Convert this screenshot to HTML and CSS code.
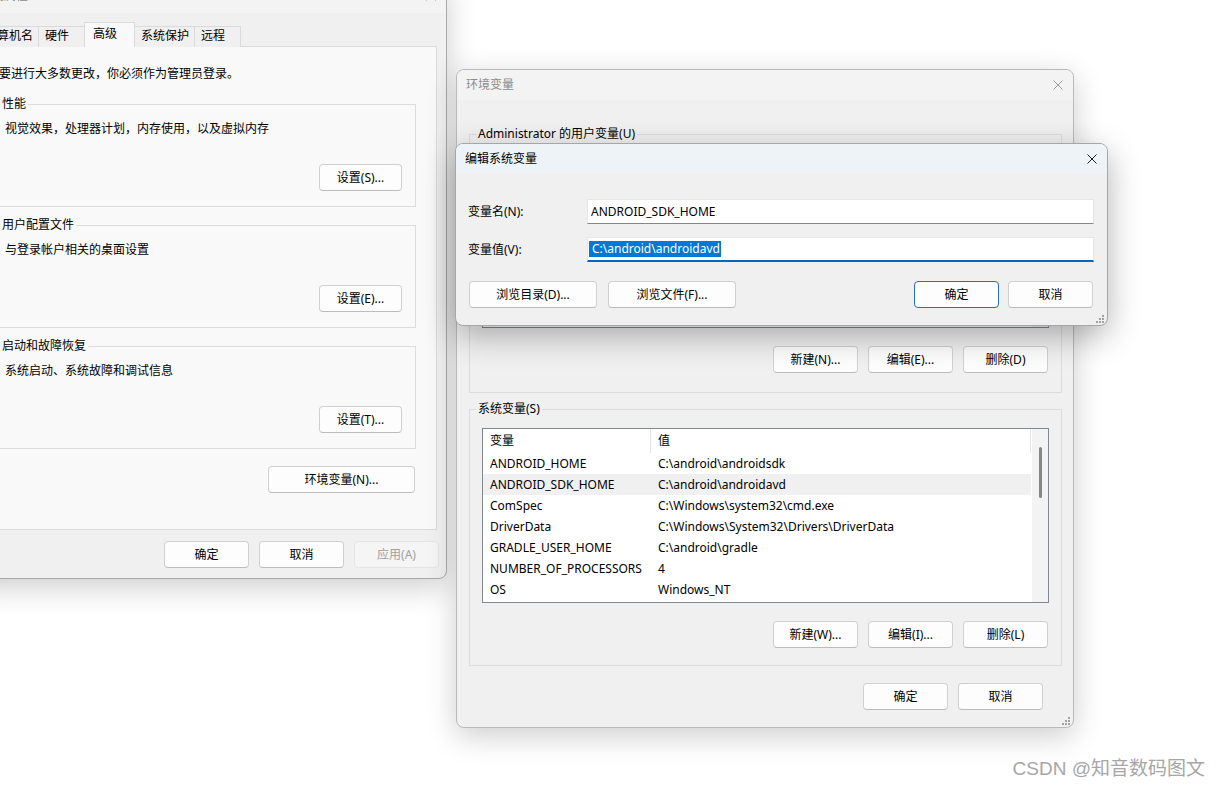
FILE: index.html
```html
<!DOCTYPE html>
<html lang="zh-CN">
<head>
    <meta charset="UTF-8">
    <title>环境变量</title>
    <link rel="stylesheet" href="styles.css">
</head>
<body>
<div class="desktop">

    <!-- 系统属性 -->
    <div class="window sys-props">
        <div class="titlebar sys-title">
            <span class="title">系统属性</span>
            <svg class="close" viewBox="0 0 10 10"><path d="M0.5 0.5L9.5 9.5M9.5 0.5L0.5 9.5"/></svg>
        </div>
        <div class="sys-body">
            <div class="tabs">
                <div class="tab first">计算机名</div>
                <div class="tab">硬件</div>
                <div class="tab active">高级</div>
                <div class="tab">系统保护</div>
                <div class="tab">远程</div>
            </div>
            <div class="tab-page">
                <p class="intro">要进行大多数更改，你必须作为管理员登录。</p>

                <fieldset class="group sys-group">
                    <legend>性能</legend>
                    <p>视觉效果，处理器计划，内存使用，以及虚拟内存</p>
                    <div class="group-actions"><button class="btn">设置(S)...</button></div>
                </fieldset>

                <fieldset class="group sys-group">
                    <legend>用户配置文件</legend>
                    <p>与登录帐户相关的桌面设置</p>
                    <div class="group-actions"><button class="btn">设置(E)...</button></div>
                </fieldset>

                <fieldset class="group sys-group">
                    <legend>启动和故障恢复</legend>
                    <p>系统启动、系统故障和调试信息</p>
                    <div class="group-actions"><button class="btn">设置(T)...</button></div>
                </fieldset>

                <div class="env-row"><button class="btn btn-env">环境变量(N)...</button></div>
            </div>
            <div class="dialog-buttons">
                <button class="btn">确定</button>
                <button class="btn">取消</button>
                <button class="btn" disabled>应用(A)</button>
            </div>
        </div>
    </div>

    <!-- 环境变量 -->
    <div class="window env-vars">
        <div class="titlebar env-title">
            <span class="title">环境变量</span>
            <svg class="close" viewBox="0 0 10 10"><path d="M0.5 0.5L9.5 9.5M9.5 0.5L0.5 9.5"/></svg>
        </div>
        <div class="env-body">
            <fieldset class="group env-group user-vars">
                <legend>Administrator 的用户变量(U)</legend>
                <!-- list content sits under the edit dialog -->
                <div class="var-list">
                    <div class="var-table"></div>
                    <div class="scrollbar"></div>
                </div>
                <div class="group-actions">
                    <button class="btn">新建(N)...</button>
                    <button class="btn">编辑(E)...</button>
                    <button class="btn">删除(D)</button>
                </div>
            </fieldset>

            <fieldset class="group env-group sys-vars">
                <legend>系统变量(S)</legend>
                <div class="var-list">
                    <div class="var-table">
                        <div class="var-row var-head"><span class="col-name">变量</span><span class="col-value">值</span></div>
                        <div class="var-row"><span class="col-name">ANDROID_HOME</span><span class="col-value">C:\android\androidsdk</span></div>
                        <div class="var-row selected"><span class="col-name">ANDROID_SDK_HOME</span><span class="col-value">C:\android\androidavd</span></div>
                        <div class="var-row"><span class="col-name">ComSpec</span><span class="col-value">C:\Windows\system32\cmd.exe</span></div>
                        <div class="var-row"><span class="col-name">DriverData</span><span class="col-value">C:\Windows\System32\Drivers\DriverData</span></div>
                        <div class="var-row"><span class="col-name">GRADLE_USER_HOME</span><span class="col-value">C:\android\gradle</span></div>
                        <div class="var-row"><span class="col-name">NUMBER_OF_PROCESSORS</span><span class="col-value">4</span></div>
                        <div class="var-row"><span class="col-name">OS</span><span class="col-value">Windows_NT</span></div>
                    </div>
                    <div class="scrollbar"><div class="thumb"></div></div>
                </div>
                <div class="group-actions">
                    <button class="btn">新建(W)...</button>
                    <button class="btn">编辑(I)...</button>
                    <button class="btn">删除(L)</button>
                </div>
            </fieldset>

            <div class="dialog-buttons env-buttons">
                <button class="btn">确定</button>
                <button class="btn">取消</button>
            </div>
        </div>
        <svg class="grip" viewBox="0 0 8 8"><rect x="6" y="0" width="2" height="2"/><rect x="3" y="3" width="2" height="2"/><rect x="6" y="3" width="2" height="2"/><rect x="0" y="6" width="2" height="2"/><rect x="3" y="6" width="2" height="2"/><rect x="6" y="6" width="2" height="2"/></svg>
    </div>

    <!-- 编辑系统变量 -->
    <div class="window edit-var">
        <div class="titlebar edit-title active">
            <span class="title">编辑系统变量</span>
            <svg class="close" viewBox="0 0 10 10"><path d="M0.5 0.5L9.5 9.5M9.5 0.5L0.5 9.5"/></svg>
        </div>
        <div class="edit-body">
            <div class="field-row">
                <label class="field-label">变量名(N):</label>
                <div class="field">ANDROID_SDK_HOME</div>
            </div>
            <div class="field-row">
                <label class="field-label">变量值(V):</label>
                <div class="field focused"><span class="sel">C:\android\androidavd</span></div>
            </div>
            <div class="edit-buttons">
                <div class="btn-group">
                    <button class="btn btn-browse">浏览目录(D)...</button>
                    <button class="btn btn-browse">浏览文件(F)...</button>
                </div>
                <div class="btn-group right">
                    <button class="btn default">确定</button>
                    <button class="btn">取消</button>
                </div>
            </div>
        </div>
        <svg class="grip" viewBox="0 0 8 8"><rect x="6" y="0" width="2" height="2"/><rect x="3" y="3" width="2" height="2"/><rect x="6" y="3" width="2" height="2"/><rect x="0" y="6" width="2" height="2"/><rect x="3" y="6" width="2" height="2"/><rect x="6" y="6" width="2" height="2"/></svg>
    </div>

    <div class="watermark">CSDN @知音数码图文</div>
</div>
</body>
</html>
```

FILE: styles.css
```css
* {
    margin: 0;
    padding: 0;
    box-sizing: border-box;
}

body {
    width: 1220px;
    height: 788px;
    overflow: hidden;
    background: #fff;
    font-family: "Noto Sans", "Noto Sans CJK SC", sans-serif;
    font-size: 12px;
    line-height: 16px;
    color: #000;
}

.desktop {
    position: relative;
    width: 1220px;
    height: 788px;
    overflow: hidden;
}

/* windows */
.window {
    position: absolute;
    display: flex;
    flex-direction: column;
    background: #f0f0f0;
    border: 1px solid #b9b9b9;
    border-radius: 8px;
    overflow: hidden;
    box-shadow: 0 8px 30px rgba(0, 0, 0, 0.2);
}

.sys-props {
    left: -28px;
    top: -22px;
    width: 475px;
    height: 601px;
    border-color: #a9a9a9;
    z-index: 1;
}

.env-vars {
    left: 456px;
    top: 69px;
    width: 618px;
    height: 659px;
    z-index: 2;
}

.edit-var {
    left: 455px;
    top: 143px;
    width: 653px;
    height: 183px;
    border-color: #a6a6a6;
    z-index: 3;
    box-shadow: 0 10px 32px rgba(0, 0, 0, 0.3);
}

.titlebar {
    flex: none;
    display: flex;
    align-items: center;
    justify-content: space-between;
    padding: 0 10px 0 9px;
    background: #f3f3f3;
}

.titlebar .title {
    color: #8c8c8c;
}

.titlebar.active {
    background: #eef3f8;
}

.titlebar.active .title {
    color: #000;
}

.sys-title { height: 34px; padding-left: 7px; }
.env-title { height: 30px; }
.edit-title { height: 29px; }

.close {
    width: 10px;
    height: 10px;
    fill: none;
    stroke: #9a9a9a;
    stroke-width: 1;
}

.active .close {
    stroke: #1b1b1b;
}

.grip {
    position: absolute;
    right: 3px;
    bottom: 2px;
    width: 8px;
    height: 8px;
    fill: #a3a3a3;
}

/* buttons */
.btn {
    width: 85px;
    height: 27px;
    font: inherit;
    color: #000;
    background: #fdfdfd;
    border: 1px solid #d0d0d0;
    border-bottom-color: #bcbcbc;
    border-radius: 4px;
}

.btn:disabled {
    color: #a0a0a0;
    background: #f5f5f5;
    border-color: #e5e5e5;
}

.btn.default {
    border-color: #1f6fc5;
}

/* group boxes */
.group {
    border: 1px solid #dcdcdc;
    min-width: 0;
}

.group legend {
    padding: 0 2px;
}

.group-actions {
    display: flex;
    justify-content: flex-end;
    gap: 10px;
}

/* 系统属性 */
.sys-body {
    flex: 1;
    display: flex;
    flex-direction: column;
    padding: 10px 9px 10px 8px;
}

.tabs {
    flex: none;
    display: flex;
    align-items: flex-end;
    height: 24px;
    margin-left: -3px;
    margin-bottom: -1px;
    position: relative;
    z-index: 1;
}

.tab {
    height: 21px;
    min-width: 47px;
    padding: 1px 5px 0 6px;
    border: 1px solid #dadada;
    border-bottom: none;
    margin-right: -1px;
    background: #f0f0f0;
    white-space: nowrap;
}

.tab.first {
    width: 61px;
}

.tab.active {
    height: 25px;
    min-width: 51px;
    padding: 3px 5px 0 8px;
    background: #f9f9f9;
    position: relative;
    z-index: 1;
}

.tab-page {
    flex: 1;
    background: #f9f9f9;
    border: 1px solid #dadada;
    padding: 19px 20px 0 11px;
}

.intro {
    padding-left: 6px;
}

.sys-group {
    margin-top: 14px;
    padding: 9px 13px 15px 11px;
}

.sys-group + .sys-group {
    margin-top: 10px;
}

.sys-group legend {
    margin-left: -5px;
}

.sys-group .group-actions {
    margin-top: 27px;
}

.sys-group .btn {
    width: 83px;
}

.env-row {
    display: flex;
    justify-content: flex-end;
    margin-top: 17px;
    padding-right: 1px;
}

.btn-env {
    width: 147px;
}

.dialog-buttons {
    flex: none;
    display: flex;
    justify-content: flex-end;
    gap: 10px;
    margin-top: 11px;
    margin-right: -2px;
}

/* 环境变量 */
.env-body {
    flex: 1;
    display: flex;
    flex-direction: column;
    padding: 26px 11px 16px 12px;
}

.env-group {
    padding: 11px 12px 17px 12px;
}

.env-group.user-vars {
    padding-bottom: 19px;
}

.env-group legend {
    margin-left: -6px;
}

.env-group .group-actions {
    margin-top: 18px;
    margin-right: 1px;
}

.sys-vars {
    margin-top: 8px;
}

.var-list {
    display: flex;
    height: 175px;
    border: 1px solid #828790;
    background: #fff;
    overflow: hidden;
}

.var-table {
    flex: 1;
}

.var-row {
    display: flex;
    height: 21px;
    align-items: center;
    white-space: nowrap;
}

.var-row.selected {
    background: #f0f0f0;
}

.var-head {
    height: 24px;
    border-right: 1px solid #e5e5e5;
}

.col-name {
    flex: none;
    width: 168px;
    padding-left: 7px;
}

.var-head .col-name {
    height: 100%;
    display: flex;
    align-items: center;
    border-right: 1px solid #e5e5e5;
}

.col-value {
    padding-left: 7px;
}

.scrollbar {
    flex: none;
    width: 17px;
    background: #f3f3f3;
    display: flex;
    justify-content: center;
    border-left: 1px solid #fff;
}

.thumb {
    width: 3px;
    height: 51px;
    margin-top: 18px;
    border-radius: 2px;
    background: #868686;
}

.env-buttons {
    margin-top: 17px;
    margin-right: 19px;
}

/* 编辑系统变量 */
.edit-body {
    flex: 1;
    display: flex;
    flex-direction: column;
    padding: 26px 13px 16px 12px;
}

.field-row {
    display: flex;
    align-items: center;
    height: 25px;
}

.field-row + .field-row {
    margin-top: 13px;
}

.field-label {
    flex: none;
    width: 119px;
    padding-top: 1px;
}

.field {
    flex: 1;
    height: 25px;
    padding: 4px 0 0 3px;
    background: #fff;
    border: 1px solid #e6e6e6;
    border-bottom-color: #868686;
    white-space: nowrap;
}

.field.focused {
    padding: 3px 0 0 1px;
    border-bottom: 2px solid #0067c0;
}

.sel {
    display: inline-block;
    padding: 0 1px 0 3px;
    background: #0078d7;
    color: #fff;
}

.edit-buttons {
    display: flex;
    justify-content: space-between;
    margin-top: 19px;
    padding-left: 1px;
}

.btn-group {
    display: flex;
    gap: 11px;
}

.btn-group.right {
    gap: 9px;
    margin-right: 1px;
}

.btn-browse {
    width: 128px;
}

.watermark {
    position: absolute;
    right: 15px;
    top: 758px;
    font-family: "Liberation Sans", "Noto Sans CJK SC", sans-serif;
    font-size: 19px;
    line-height: 22px;
    color: #a6a6a6;
    z-index: 4;
}
```
